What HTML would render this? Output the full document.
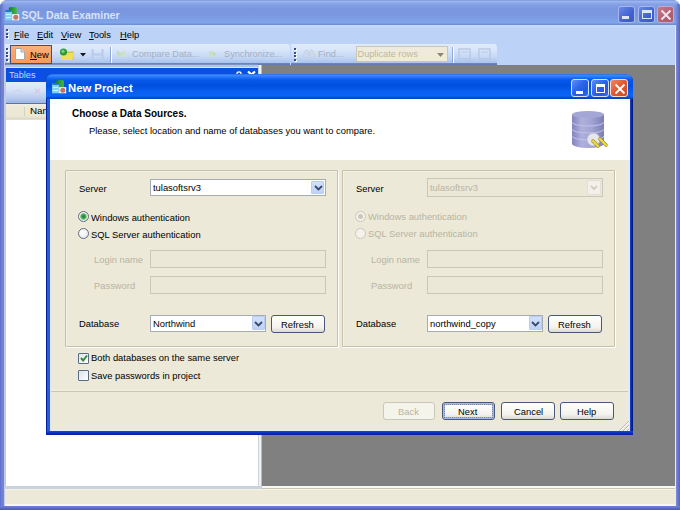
<!DOCTYPE html>
<html><head><meta charset="utf-8">
<style>
*{box-sizing:border-box;margin:0;padding:0}
html{background:#fff}
html,body{width:680px;height:510px;overflow:hidden}
body{border-radius:7px 7px 0 0;position:relative;background:linear-gradient(90deg,#5668c6 0,#6c7dd2 1px,#7384d6 3px,#7384d6 676px,#8591da 676px,#7380d4 677px,#5563c4 680px);font-family:"Liberation Sans",sans-serif;font-size:9.4px;color:#000}
.a{position:absolute}
.t{position:absolute;white-space:nowrap;line-height:1}
</style></head><body>

<!-- main title bar -->
<div class="a" style="left:0;top:0;width:680px;height:25px;background:linear-gradient(#7d98dc 0,#9ab4f0 1.5px,#87a2e6 4px,#7a96de 9px,#7a98e0 15px,#7ea2e8 21px,#82a6ec 23px,#6e8ed6 24px,#6e8ed6 25px);border-radius:6px 6px 0 0"></div>
<div class="a" style="left:5px;top:7px"><svg width="15" height="14" viewBox="0 0 15 14"><defs><linearGradient id="gg" x1="0" x2="1"><stop offset="0" stop-color="#137a23"/><stop offset="1" stop-color="#43be47"/></linearGradient></defs><path d="M3.8 1a4 1 0 0 1 8 0V7.1h-8z" fill="url(#gg)"/><rect x="0" y="3.6" width="7.1" height="9.7" fill="#7ed0f4"/><rect x="0" y="3.1" width="7.1" height="2" rx="1" fill="#2a78b8"/><rect x="1" y="7" width="5" height="1" fill="#d0f4ff"/><rect x="1" y="10" width="5" height="1" fill="#d0f4ff"/><rect x="7.1" y="7.1" width="7.1" height="6.2" fill="#eef2fa"/><circle cx="10.8" cy="10.3" r="2.5" fill="#c57462"/></svg></div>
<div class="t" style="left:21.5px;top:9.5px;font-size:10.6px;font-weight:bold;color:#d8e3f9">SQL Data Examiner</div>
<div class="a" style="left:0;top:4px;width:5px;height:21px;background:linear-gradient(90deg,#5a6cc8,#6c80d4 2px,rgba(120,140,220,0) 5px)"></div>
<div class="a" style="left:675px;top:4px;width:5px;height:21px;background:linear-gradient(270deg,#5563c4,#6a7cd0 2px,rgba(120,140,220,0) 5px)"></div>
<!-- main title buttons -->
<div class="a" style="left:618px;top:6px;width:17px;height:17px;border:1px solid #a6b6ee;border-radius:3px;background:linear-gradient(135deg,#6c8ae6,#4262d2 60%,#3a5acb)"><div class="a" style="left:3px;top:9px;width:7px;height:3px;background:#dfe6fb"></div></div>
<div class="a" style="left:638px;top:6px;width:17px;height:17px;border:1px solid #a6b6ee;border-radius:3px;background:linear-gradient(135deg,#6c8ae6,#4262d2 60%,#3a5acb)"><div class="a" style="left:2.5px;top:3px;width:10px;height:9px;border:1.5px solid #dfe6fb;border-top-width:3px"></div></div>
<div class="a" style="left:657px;top:6px;width:17px;height:17px;border:1px solid #c2a8d0;border-radius:3px;background:linear-gradient(135deg,#c47a8a,#b06272 60%,#a85a6c)">
 <svg class="a" style="left:2px;top:2px" width="12" height="12"><path d="M1.5 1.5L10.5 10.5M10.5 1.5L1.5 10.5" stroke="#f2e4ec" stroke-width="1.9"/></svg></div>

<!-- client area -->
<div class="a" style="left:4px;top:25px;width:672px;height:481px;background:linear-gradient(#c6dcfc,#bcd3f7 3px,#bcd3f7);border-left:1px solid #c4cbe8;border-right:1px solid #e4e8fc"></div>
<div class="a" style="left:0;top:506px;width:680px;height:4px;background:linear-gradient(#7684d4,#5a68c6 60%,#4a58b8)"></div>

<!-- menu -->
<div class="a" style="left:6px;top:29.4px;width:2px;height:2px;background:#34508a;box-shadow:1px 1px 0 #fff"></div><div class="a" style="left:6px;top:32.9px;width:2px;height:2px;background:#34508a;box-shadow:1px 1px 0 #fff"></div><div class="a" style="left:6px;top:36.4px;width:2px;height:2px;background:#34508a;box-shadow:1px 1px 0 #fff"></div>
<div class="t" style="left:14px;top:30px;font-size:9.4px"><u style="text-decoration-thickness:1px;text-underline-offset:1px">F</u>ile</div>
<div class="t" style="left:37px;top:30px;font-size:9.4px"><u style="text-decoration-thickness:1px;text-underline-offset:1px">E</u>dit</div>
<div class="t" style="left:61px;top:30px;font-size:9.4px"><u style="text-decoration-thickness:1px;text-underline-offset:1px">V</u>iew</div>
<div class="t" style="left:89px;top:30px;font-size:9.4px"><u style="text-decoration-thickness:1px;text-underline-offset:1px">T</u>ools</div>
<div class="t" style="left:120px;top:30px;font-size:9.4px"><u style="text-decoration-thickness:1px;text-underline-offset:1px">H</u>elp</div>

<!-- toolbar strips -->
<div class="a" style="left:5px;top:44px;width:285px;height:21px;background:linear-gradient(#e0eafb 0,#d8e5fa 30%,#c2d6f4 65%,#a8c2ee 92%,#6c88b8 92%,#5c78a8 100%);border-radius:0 3px 0 0"></div>
<div class="a" style="left:291px;top:44px;width:206px;height:21px;background:linear-gradient(#e0eafb 0,#d8e5fa 30%,#c2d6f4 65%,#a8c2ee 92%,#6c88b8 92%,#5c78a8 100%);border-radius:0 3px 0 0"></div>
<div class="a" style="left:6px;top:48.0px;width:2px;height:2px;background:#34508a;box-shadow:1px 1px 0 #fff"></div><div class="a" style="left:6px;top:51.6px;width:2px;height:2px;background:#34508a;box-shadow:1px 1px 0 #fff"></div><div class="a" style="left:6px;top:55.2px;width:2px;height:2px;background:#34508a;box-shadow:1px 1px 0 #fff"></div><div class="a" style="left:6px;top:58.8px;width:2px;height:2px;background:#34508a;box-shadow:1px 1px 0 #fff"></div>
<div class="a" style="left:294px;top:48.0px;width:2px;height:2px;background:#34508a;box-shadow:1px 1px 0 #fff"></div><div class="a" style="left:294px;top:51.6px;width:2px;height:2px;background:#34508a;box-shadow:1px 1px 0 #fff"></div><div class="a" style="left:294px;top:55.2px;width:2px;height:2px;background:#34508a;box-shadow:1px 1px 0 #fff"></div><div class="a" style="left:294px;top:58.8px;width:2px;height:2px;background:#34508a;box-shadow:1px 1px 0 #fff"></div>
<!-- New button -->
<div class="a" style="left:10px;top:45px;width:42px;height:19px;border:1px solid #4a4c78;background:linear-gradient(#fab07c,#f8a46a 50%,#f69a5e)"></div>
<svg class="a" style="left:15px;top:48px" width="10" height="12"><path d="M.5 .5h5.5l3.5 3.5v7.5h-9z" fill="#fff" stroke="#a8a8a8"/><path d="M6 .5v3.5h3.5" fill="#e0e0e0" stroke="#a8a8a8"/></svg>
<div class="t" style="left:30px;top:50px;font-size:9.4px">New</div>
<div class="a" style="left:30px;top:59px;width:7px;height:1px;background:#000"></div>
<!-- open icon -->
<svg class="a" style="left:59px;top:47px" width="16" height="14"><path d="M3 3h4l1 1.5h6.5V13H3z" fill="#d8c030"/><path d="M3.5 6h11l-1 7H2.5z" fill="#f0e060"/><circle cx="4.5" cy="5" r="3.6" fill="#2e9a3a"/><circle cx="4" cy="4.3" r="1.6" fill="#7ad07a"/></svg>
<svg class="a" style="left:80px;top:53px" width="6" height="4"><path d="M0 0h6L3 3.5z" fill="#1a1a1a"/></svg>
<svg class="a" style="left:91px;top:48px" width="13" height="13"><path d="M1.5 1v11M11.5 1v11M1.5 6.5h10" stroke="#b9cbec" stroke-width="2"/></svg>
<div class="a" style="left:110px;top:47px;width:1px;height:16px;background:#8fa8d9;box-shadow:1px 0 0 #fff"></div>
<svg class="a" style="left:116px;top:48px" width="10" height="12"><path d="M1 2l5 4-5 4z" fill="#c4dcb8"/><rect x="6" y="3" width="3" height="6" fill="#d0e0cc"/></svg>
<div class="t" style="left:132px;top:50px;font-size:9.2px;color:#a5afc2">Compare Data...</div>
<svg class="a" style="left:207px;top:48px" width="12" height="12"><path d="M2 3h4v6H2z" fill="#cce0c4"/><path d="M6 4l4 2-4 2z" fill="#c0d8b4"/></svg>
<div class="t" style="left:224px;top:50px;font-size:9.2px;color:#a5afc2">Synchronize...</div>
<svg class="a" style="left:302px;top:48px" width="14" height="12"><path d="M2 4l3-2 2 3M12 4l-3-2-2 3" stroke="#c8d0de" stroke-width="1.2" fill="none"/><circle cx="4" cy="7.5" r="2.5" fill="none" stroke="#c8d0de" stroke-width="1.2"/><circle cx="10" cy="7.5" r="2.5" fill="none" stroke="#c8d0de" stroke-width="1.2"/></svg>
<div class="t" style="left:318px;top:50px;font-size:9.2px;color:#a5afc2">Find...</div>
<!-- duplicate rows combo -->
<div class="a" style="left:356px;top:46px;width:92px;height:16px;background:#efebdc;border:1px solid #c9c6b4"></div>
<div class="t" style="left:357.5px;top:50px;font-size:9.2px;color:#bcb89c">Duplicate rows</div>
<svg class="a" style="left:437px;top:53px" width="7" height="4"><path d="M0 0h7L3.5 4z" fill="#8a8670"/></svg>
<div class="a" style="left:452px;top:47px;width:1px;height:16px;background:#8fa8d9;box-shadow:1px 0 0 #fff"></div>
<svg class="a" style="left:458px;top:47px" width="14" height="14"><rect x="1" y="2" width="11" height="10" fill="none" stroke="#b6c6e2" stroke-width="1.3"/><rect x="3" y="4" width="7" height="2" fill="#c8d4ea"/></svg>
<svg class="a" style="left:478px;top:47px" width="14" height="14"><rect x="1" y="2" width="11" height="10" fill="none" stroke="#b6c6e2" stroke-width="1.3"/><rect x="3" y="4" width="7" height="2" fill="#c8d4ea"/></svg>

<!-- MDI gray area -->
<div class="a" style="left:262px;top:65px;width:413px;height:421px;background:#808080"></div>
<!-- splitter -->
<div class="a" style="left:258px;top:65px;width:4px;height:421px;background:linear-gradient(90deg,#ccd4dc 0,#ccd4dc 1px,#eef0f4 1px,#eef0f4 3px,#b8bcc0 3px)"></div>

<!-- left panel -->
<div class="a" style="left:5px;top:65px;width:253px;height:421px;background:#c0c8e4"></div>
<div class="a" style="left:6px;top:64px;width:252px;height:4px;background:linear-gradient(#7e94c0 0,#7e94c0 1px,#b4c4e4 1px,#b4c4e4 3px,#d4e6fc 3px)"></div>
<div class="a" style="left:6px;top:68px;width:252px;height:14px;background:#0a4fdf"></div>
<div class="t" style="left:9px;top:71px;font-size:9.2px;color:#c4d4f4">Tables</div>
<svg class="a" style="left:236px;top:71px" width="6" height="6"><path d="M1 6V2.5a2 1.6 0 0 1 4 0V6" stroke="#fff" stroke-width="1.3" fill="none"/></svg>
<svg class="a" style="left:247px;top:70px" width="9" height="6"><path d="M1 1.5l3.5 3 3.5-3" stroke="#fff" stroke-width="2.2" fill="none"/></svg>
<div class="a" style="left:6px;top:82px;width:252px;height:22px;background:linear-gradient(#e4ecfa,#d8e3f7 35%,#b8ccef 72%,#9cb6e6 94%,#5c74a0 94%)"></div>
<svg class="a" style="left:10px;top:85px" width="40" height="16"><path d="M3 10a5 4 0 0 1 9-3" stroke="#ccd6ec" stroke-width="1.4" fill="none"/><path d="M25 4l5 4M30 4l-5 4" stroke="#dcc8dc" stroke-width="1.4"/></svg>
<div class="a" style="left:6px;top:104px;width:252px;height:16px;background:linear-gradient(#f2f0e6,#ece9d8 3px,#ebe8d6 80%,#dcd8c4);border-bottom:1px solid #e4e0d0"></div>
<div class="a" style="left:24px;top:106.5px;width:1px;height:9.5px;background:#d4d0bc"></div>
<div class="t" style="left:30px;top:106px;font-size:9.8px">Name</div>
<div class="a" style="left:6px;top:120px;width:252px;height:366px;background:#fff"></div>

<!-- status bar -->
<div class="a" style="left:5px;top:486px;width:670px;height:20px;background:linear-gradient(#f8f8f0 0,#f8f8f0 2px,#c8c6b4 2px,#c8c6b4 3px,#f6f4e8 3px,#f6f4e8 4px,#ece9d8 4px,#ece9d8 18px,#f6f6f4 18px)"></div>
<div class="a" style="left:5px;top:486px;width:257px;height:3px;background:#c9d3dc"></div>

<!-- ========== DIALOG ========== -->
<div class="a" style="left:46px;top:74px;width:587px;height:361px;border-radius:7px 7px 0 0;background:linear-gradient(90deg,#0020a0 0,#0020a0 1px,#2a5cd8 1px,#2a5cd8 4px,transparent 4px,transparent 584px,#1a40c0 584px,#1238b8 585px,#001a80 586px)"></div>
<div class="a" style="left:46px;top:431px;width:587px;height:4px;background:linear-gradient(#1a48d0,#0a30c0 50%,#0a1c98)"></div>
<div class="a" style="left:46px;top:74px;width:587px;height:25px;border-radius:7px 7px 0 0;background:linear-gradient(#2a5ed0 0,#3d8cff 1px,#2477fa 3px,#0658e8 6px,#0050df 12px,#0860f2 18px,#0a64f6 22px,#0048c8 24px,#0040b8 25px)"></div>
<div class="a" style="left:52px;top:80px"><svg width="15" height="14" viewBox="0 0 15 14"><defs><linearGradient id="gg2" x1="0" x2="1"><stop offset="0" stop-color="#137a23"/><stop offset="1" stop-color="#43be47"/></linearGradient></defs><path d="M3.8 1a4 1 0 0 1 8 0V7.1h-8z" fill="url(#gg2)"/><rect x="0" y="3.6" width="7.1" height="9.7" fill="#7ed0f4"/><rect x="0" y="3.1" width="7.1" height="2" rx="1" fill="#2a78b8"/><rect x="1" y="7" width="5" height="1" fill="#d0f4ff"/><rect x="1" y="10" width="5" height="1" fill="#d0f4ff"/><rect x="7.1" y="7.1" width="7.1" height="6.2" fill="#eef2fa"/><circle cx="10.8" cy="10.3" r="2.5" fill="#c57462"/></svg></div>
<div class="t" style="left:68px;top:83px;font-size:11.3px;font-weight:bold;color:#fff">New Project</div>
<div class="a" style="left:571px;top:79px;width:18px;height:18px;border:1px solid #d4e2ff;border-radius:3px;background:linear-gradient(135deg,#5c8ef8 0,#2c64ea 45%,#2458e2 75%,#3a70f2)"><div class="a" style="left:3.5px;top:10.5px;width:7px;height:3px;background:#fff"></div></div>
<div class="a" style="left:591px;top:79px;width:18px;height:18px;border:1px solid #d4e2ff;border-radius:3px;background:linear-gradient(135deg,#5c8ef8 0,#2c64ea 45%,#2458e2 75%,#3a70f2)"><div class="a" style="left:3.5px;top:3.5px;width:9px;height:9px;border:1.5px solid #fff;border-top-width:3px"></div></div>
<div class="a" style="left:610px;top:79px;width:18px;height:18px;border:1px solid #f4dcd4;border-radius:3px;background:linear-gradient(135deg,#f08a5e,#e0582e 50%,#d04a24)">
 <svg class="a" style="left:2.5px;top:2.5px" width="12" height="12"><path d="M1.5 1.5L10.5 10.5M10.5 1.5L1.5 10.5" stroke="#fff" stroke-width="1.9"/></svg></div>

<!-- dialog body -->
<div class="a" style="left:50px;top:99px;width:580px;height:332px;background:#ece9d8;border-left:1px solid #dde6f8;border-right:2px solid #e4eafa;border-bottom:1px solid #e4eafa"></div>
<div class="a" style="left:50px;top:99px;width:580px;height:61px;background:#fff"></div>
<div class="t" style="left:72px;top:109px;font-size:10px;font-weight:bold">Choose a Data Sources.</div>
<div class="t" style="left:89px;top:126px">Please, select location and name of databases you want to compare.</div>
<!-- db icon -->
<svg class="a" style="left:571px;top:110px" width="40" height="40" viewBox="0 0 40 40">
 <defs><linearGradient id="cy" x1="0" x2="1"><stop offset="0" stop-color="#8384bd"/><stop offset=".3" stop-color="#aeb0dc"/><stop offset=".6" stop-color="#a2a4d4"/><stop offset="1" stop-color="#7c7eb6"/></linearGradient></defs>
 <path d="M1 4.5v29a16 4.5 0 0 0 32 0V4.5z" fill="url(#cy)"/>
 <ellipse cx="17" cy="4.5" rx="16" ry="3.5" fill="#a4a6d6"/>
 <path d="M1 12a16 4 0 0 0 32 0M1 19a16 4 0 0 0 32 0M1 26a16 4 0 0 0 32 0" stroke="#c2c4ea" fill="none" stroke-width="1"/>
 <circle cx="22.5" cy="29.5" r="6.5" fill="#e6e6ee" stroke="#b8b8c8" stroke-width=".8"/>
 <path d="M22 31l5 5" stroke="#a89a20" stroke-width="3.6" stroke-linecap="round"/>
 <path d="M22 31l5 5" stroke="#e8d848" stroke-width="2.2" stroke-linecap="round"/>
 <path d="M29 29l6 6" stroke="#a89a20" stroke-width="3.6" stroke-linecap="round"/>
 <path d="M29 29l6 6" stroke="#e8d848" stroke-width="2.2" stroke-linecap="round"/>
</svg>

<!-- group boxes -->
<div class="a" style="left:65px;top:170px;width:273px;height:177px;border:1px solid #c4c0aa;border-radius:1px;box-shadow:inset 1px 1px 0 #f4f2e8,1px 1px 0 #fff"></div>
<div class="a" style="left:342px;top:170px;width:273px;height:177px;border:1px solid #c4c0aa;border-radius:1px;box-shadow:inset 1px 1px 0 #f4f2e8,1px 1px 0 #fff"></div>

<!-- left group content -->
<div class="t" style="left:79px;top:183.5px">Server</div>
<div class="a" style="left:150px;top:178.5px;width:176px;height:17.5px;background:#fff;border:1px solid #a4acb6"></div>
<div class="t" style="left:153px;top:183px">tulasoftsrv3</div>
<div class="a" style="left:311px;top:180.5px;width:13px;height:13.5px;border-radius:1px;background:linear-gradient(#d2e0fa,#c0d2f6);border:1px solid #b8ccf2"></div>
<svg class="a" style="left:313.5px;top:184.5px" width="9" height="6"><path d="M1 1l3.5 3.5L8 1" stroke="#3a4a6e" stroke-width="1.8" fill="none"/></svg>

<div class="a" style="left:78px;top:211px;width:11px;height:11px;border-radius:50%;border:1px solid #646a78;background:radial-gradient(circle at 40% 40%,#fff,#dfe4ea)"></div>
<div class="a" style="left:80px;top:213px;width:7px;height:7px;border-radius:50%;background:radial-gradient(#2a7a3a 0,#3c9a4a 35%,#a8e8b0 75%,#d0f4d8 100%)"></div>
<div class="t" style="left:91px;top:212.5px">Windows authentication</div>
<div class="a" style="left:78px;top:228px;width:11px;height:11px;border-radius:50%;border:1px solid #646a78;background:radial-gradient(circle at 40% 40%,#fff,#dfe4ea)"></div>
<div class="t" style="left:91px;top:229.5px">SQL Server authentication</div>

<div class="t" style="left:94px;top:255px;color:#b8b4a2">Login name</div>
<div class="a" style="left:150px;top:250px;width:176px;height:18px;background:#ebe8d8;border:1px solid #c9c7ba"></div>
<div class="t" style="left:94px;top:281px;color:#b8b4a2">Password</div>
<div class="a" style="left:150px;top:276px;width:176px;height:18px;background:#ebe8d8;border:1px solid #c9c7ba"></div>

<div class="t" style="left:79px;top:319px">Database</div>
<div class="a" style="left:150px;top:314.5px;width:116px;height:17.5px;background:#fff;border:1px solid #a4acb6"></div>
<div class="t" style="left:153px;top:319px">Northwind</div>
<div class="a" style="left:252px;top:316px;width:12.5px;height:14px;border-radius:1px;background:linear-gradient(#d2e0fa,#c0d2f6);border:1px solid #b8ccf2"></div>
<svg class="a" style="left:254px;top:320.5px" width="9" height="6"><path d="M1 1l3.5 3.5L8 1" stroke="#3a4a6e" stroke-width="1.8" fill="none"/></svg>
<div class="a" style="left:271px;top:315px;width:54px;height:18px;border:1px solid #485878;border-radius:3px;background:linear-gradient(#fff,#f4f3ee 70%,#dcdad0)"></div>
<div class="t" style="left:281px;top:320px">Refresh</div>

<!-- right group content -->
<div class="t" style="left:356px;top:183.5px">Server</div>
<div class="a" style="left:427px;top:178px;width:176px;height:19px;background:#ebe8d8;border:1px solid #c9c7ba"></div>
<div class="t" style="left:430px;top:183px;color:#b8b4a2">tulasoftsrv3</div>
<div class="a" style="left:587px;top:180px;width:14px;height:15px;border-radius:2px;background:#f2f0e8;border:1px solid #e2e0d4"></div>
<svg class="a" style="left:590px;top:185px" width="8" height="5"><path d="M1 1l3 3 3-3" stroke="#c9c7ba" stroke-width="1.6" fill="none"/></svg>

<div class="a" style="left:355px;top:211px;width:11px;height:11px;border-radius:50%;border:1px solid #cac8bb;background:#f4f2ea"></div>
<div class="a" style="left:358px;top:214px;width:5px;height:5px;border-radius:50%;background:#cac8bb"></div>
<div class="t" style="left:368px;top:212px;color:#b8b4a2">Windows authentication</div>
<div class="a" style="left:355px;top:228px;width:11px;height:11px;border-radius:50%;border:1px solid #cac8bb;background:#f4f2ea"></div>
<div class="t" style="left:368px;top:229px;color:#b8b4a2">SQL Server authentication</div>

<div class="t" style="left:371px;top:255px;color:#b8b4a2">Login name</div>
<div class="a" style="left:427px;top:250px;width:176px;height:18px;background:#ebe8d8;border:1px solid #c9c7ba"></div>
<div class="t" style="left:371px;top:281px;color:#b8b4a2">Password</div>
<div class="a" style="left:427px;top:276px;width:176px;height:18px;background:#ebe8d8;border:1px solid #c9c7ba"></div>

<div class="t" style="left:356px;top:319px">Database</div>
<div class="a" style="left:427px;top:314.5px;width:116px;height:17.5px;background:#fff;border:1px solid #a4acb6"></div>
<div class="t" style="left:430px;top:319px">northwind_copy</div>
<div class="a" style="left:529px;top:316px;width:12.5px;height:14px;border-radius:1px;background:linear-gradient(#d2e0fa,#c0d2f6);border:1px solid #b8ccf2"></div>
<svg class="a" style="left:531px;top:320.5px" width="9" height="6"><path d="M1 1l3.5 3.5L8 1" stroke="#3a4a6e" stroke-width="1.8" fill="none"/></svg>
<div class="a" style="left:548px;top:315px;width:54px;height:18px;border:1px solid #485878;border-radius:3px;background:linear-gradient(#fff,#f4f3ee 70%,#dcdad0)"></div>
<div class="t" style="left:558px;top:320px">Refresh</div>

<!-- checkboxes -->
<div class="a" style="left:78px;top:352.5px;width:11px;height:11px;border:1px solid #5b6b85;border-radius:1px;background:linear-gradient(135deg,#dde4e8,#fff)"></div>
<svg class="a" style="left:80px;top:354px" width="8" height="8"><path d="M1 4l2.2 2.5L7 1.5" stroke="#2c8a3c" stroke-width="1.9" fill="none"/></svg>
<div class="t" style="left:91px;top:353px">Both databases on the same server</div>
<div class="a" style="left:78px;top:370px;width:11px;height:11px;border:1px solid #5b6b85;border-radius:1px;background:linear-gradient(135deg,#dde4e8,#fff)"></div>
<div class="t" style="left:91px;top:371px">Save passwords in project</div>

<!-- separator -->
<div class="a" style="left:51px;top:390.5px;width:577px;height:1px;background:#cbc8b2;box-shadow:0 -1.5px 0 #f2f0e6"></div>

<!-- buttons -->
<div class="a" style="left:383px;top:402px;width:52px;height:18px;border:1px solid #c9c7ba;border-radius:3px;background:#f5f4ea"></div>
<div class="t" style="left:398px;top:407px;color:#b8b4a2">Back</div>
<div class="a" style="left:442px;top:402px;width:53px;height:18px;border:1px solid #485878;border-radius:3px;background:linear-gradient(#fff,#f4f3ee 70%,#dcdad0);box-shadow:inset 0 0 0 2px #a4b8ec"></div><div class="a" style="left:444px;top:404px;width:49px;height:14px;border:1px dotted #8088a8"></div>
<div class="t" style="left:458px;top:407px">Next</div>
<div class="a" style="left:501px;top:402px;width:54px;height:18px;border:1px solid #485878;border-radius:3px;background:linear-gradient(#fff,#f4f3ee 70%,#dcdad0)"></div>
<div class="t" style="left:514px;top:407px">Cancel</div>
<div class="a" style="left:560px;top:402px;width:54px;height:18px;border:1px solid #485878;border-radius:3px;background:linear-gradient(#fff,#f4f3ee 70%,#dcdad0)"></div>
<div class="t" style="left:577px;top:407px">Help</div>

<!-- grip -->
<svg class="a" style="left:618px;top:420px" width="11" height="11"><path d="M11 1L1 11M11 5L5 11M11 9L9 11" stroke="#bcb49c" stroke-width="1"/><path d="M11 2L2 11M11 6L6 11M11 10L10 11" stroke="#fff" stroke-width="1"/></svg>

</body></html>
